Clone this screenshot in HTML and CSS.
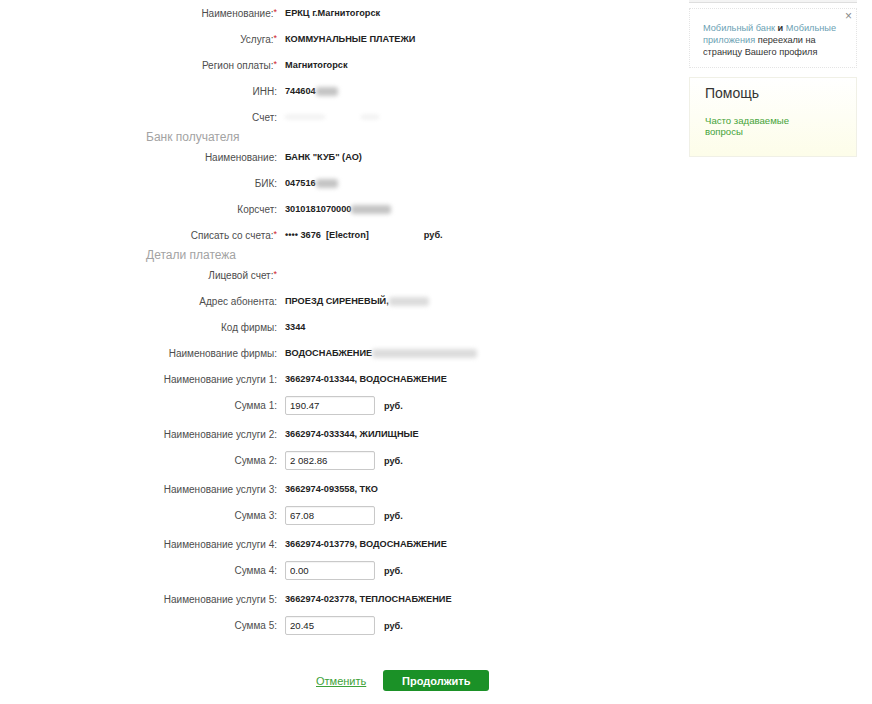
FILE: index.html
```html
<!DOCTYPE html>
<html lang="ru">
<head>
    <meta charset="utf-8" />
    <title>Оплата услуг</title>
    <link rel="stylesheet" href="styles.css">
</head>
<body>
    <div class="page">
        <div class="main">
            <div class="form">
                <div class="row"><span class="label">Наименование:<i>*</i></span><span class="value">ЕРКЦ г.Магнитогорск</span></div>
                <div class="row"><span class="label">Услуга:<i>*</i></span><span class="value">КОММУНАЛЬНЫЕ ПЛАТЕЖИ</span></div>
                <div class="row"><span class="label">Регион оплаты:<i>*</i></span><span class="value">Магнитогорск</span></div>
                <div class="row"><span class="label">ИНН:</span><span class="value">744604<span class="mask mask-s"></span></span></div>
                <div class="row"><span class="label">Счет:</span><span class="value"><span class="mask mask-faint mask-m"></span><span class="mask mask-faint mask-xs"></span></span></div>

                <h3 class="section">Банк получателя</h3>
                <div class="row"><span class="label">Наименование:</span><span class="value">БАНК "КУБ" (АО)</span></div>
                <div class="row"><span class="label">БИК:</span><span class="value">047516<span class="mask mask-s"></span></span></div>
                <div class="row"><span class="label">Корсчет:</span><span class="value">3010181070000<span class="mask mask-m"></span></span></div>
                <div class="row"><span class="label">Списать со счета:<i>*</i></span><span class="value">•••• 3676 &nbsp;[Electron]<span class="amount">руб.</span></span></div>

                <h3 class="section">Детали платежа</h3>
                <div class="row"><span class="label">Лицевой счет:<i>*</i></span><span class="value"></span></div>
                <div class="row"><span class="label">Адрес абонента:</span><span class="value">ПРОЕЗД СИРЕНЕВЫЙ,<span class="mask mask-light mask-m"></span></span></div>
                <div class="row"><span class="label">Код фирмы:</span><span class="value">3344</span></div>
                <div class="row"><span class="label">Наименование фирмы:</span><span class="value">ВОДОСНАБЖЕНИЕ<span class="mask mask-light mask-l"></span></span></div>

                <div class="row"><span class="label">Наименование услуги 1:</span><span class="value">3662974-013344, ВОДОСНАБЖЕНИЕ</span></div>
                <div class="row row-sum"><span class="label">Сумма 1:</span><span class="value"><input class="sum" type="text" value="190.47"><span class="cur">руб.</span></span></div>
                <div class="row"><span class="label">Наименование услуги 2:</span><span class="value">3662974-033344, ЖИЛИЩНЫЕ</span></div>
                <div class="row row-sum"><span class="label">Сумма 2:</span><span class="value"><input class="sum" type="text" value="2 082.86"><span class="cur">руб.</span></span></div>
                <div class="row"><span class="label">Наименование услуги 3:</span><span class="value">3662974-093558, ТКО</span></div>
                <div class="row row-sum"><span class="label">Сумма 3:</span><span class="value"><input class="sum" type="text" value="67.08"><span class="cur">руб.</span></span></div>
                <div class="row"><span class="label">Наименование услуги 4:</span><span class="value">3662974-013779, ВОДОСНАБЖЕНИЕ</span></div>
                <div class="row row-sum"><span class="label">Сумма 4:</span><span class="value"><input class="sum" type="text" value="0.00"><span class="cur">руб.</span></span></div>
                <div class="row"><span class="label">Наименование услуги 5:</span><span class="value">3662974-023778, ТЕПЛОСНАБЖЕНИЕ</span></div>
                <div class="row row-sum"><span class="label">Сумма 5:</span><span class="value"><input class="sum" type="text" value="20.45"><span class="cur">руб.</span></span></div>

                <div class="actions">
                    <a href="#" class="cancel">Отменить</a>
                    <button class="submit">Продолжить</button>
                </div>
            </div>
        </div>

        <div class="sidebar">
            <div class="top-box"></div>
            <div class="notice">
                <span class="close">×</span>
                <p class="notice-line"><a href="#" class="blue">Мобильный банк</a> <b>и</b> <a href="#apps" class="blue">Мобильные</a></p>
                <p class="notice-line"><a href="#apps" class="blue">приложения</a> переехали на</p>
                <p class="notice-line">страницу Вашего профиля</p>
            </div>
            <div class="help">
                <h4>Помощь</h4>
                <a href="#" class="green">Часто задаваемые вопросы</a>
            </div>
        </div>
    </div>
</body>
</html>
```

FILE: styles.css
```css
* {
    margin: 0;
    padding: 0;
    box-sizing: border-box;
}

body {
    font-family: "Liberation Sans", Arial, sans-serif;
    background: #fff;
    color: #333;
}

.page {
    display: flex;
    padding: 0 15px 0 146px;
}

.main {
    flex: 1;
}

.row {
    display: flex;
    align-items: center;
    height: 26px;
}

.row-sum {
    height: 29px;
    padding-bottom: 2px;
}

.label {
    width: 132px;
    flex-shrink: 0;
    text-align: right;
    font-size: 10px;
    color: #4d4d4d;
    padding-right: 1px;
    white-space: nowrap;
}

.label i {
    font-style: normal;
    color: #d0202a;
    font-size: 9px;
    vertical-align: 2px;
}

.value {
    padding-left: 7px;
    font-size: 9.2px;
    font-weight: bold;
    color: #222;
    display: flex;
    align-items: center;
    white-space: nowrap;
}

.section {
    font-size: 12px;
    font-weight: normal;
    color: #a3a3a3;
    height: 17px;
    line-height: 14px;
    margin-bottom: -3px;
}

.amount {
    margin-left: 55px;
}

.mask {
    display: inline-block;
    height: 9px;
    background: #c4c4c4;
    filter: blur(2px);
    border-radius: 3px;
}

.mask-light {
    background: #dcdcdc;
}

.mask-faint {
    background: #eeeeee;
    height: 4px;
}

.mask-xs {
    width: 18px;
    margin-left: 36px;
}

.mask-s {
    width: 22px;
}

.mask-m {
    width: 40px;
}

.mask-l {
    width: 105px;
}

.sum {
    width: 90px;
    height: 19px;
    border: 1px solid #c9c9c9;
    border-radius: 2px;
    padding: 0 4px;
    font-family: "Liberation Sans", Arial, sans-serif;
    font-size: 9.6px;
    color: #222;
    box-shadow: inset 0 1px 1px rgba(0, 0, 0, 0.05);
}

.cur {
    margin-left: 9px;
}

.actions {
    display: flex;
    align-items: center;
    gap: 17px;
    margin-top: 29px;
    padding-left: 170px;
}

.cancel {
    color: #3ea23a;
    font-size: 11px;
    text-decoration: underline;
}

.submit {
    width: 106px;
    height: 21px;
    border: none;
    border-radius: 3px;
    background: #1b9127;
    color: #fff;
    font-family: "Liberation Sans", Arial, sans-serif;
    font-size: 11px;
    font-weight: bold;
    cursor: pointer;
}

.sidebar {
    width: 168px;
    flex-shrink: 0;
}

.top-box {
    height: 3px;
    border-bottom: 1px solid #dedede;
    background: #f4f4f4;
}

.notice {
    position: relative;
    margin-top: 5px;
    border: 1px dotted #e4e4e4;
    padding: 13px 12px 10px 13px;
    height: 60px;
}

.notice-line {
    font-size: 9.2px;
    line-height: 12px;
    color: #333;
    white-space: nowrap;
}

.notice b {
    font-weight: bold;
}

.blue {
    color: #6b9fb3;
    text-decoration: none;
}

.close {
    position: absolute;
    top: 0;
    right: 4px;
    font-size: 12px;
    line-height: 14px;
    color: #8a8a8a;
}

.help {
    margin-top: 9px;
    height: 80px;
    border: 1px solid #f0f0e6;
    background: linear-gradient(to bottom, #ffffff 0%, #fdfde9 100%);
    padding: 7px 15px;
}

.help h4 {
    font-size: 14px;
    font-weight: normal;
    color: #333;
    margin-bottom: 14px;
}

.green {
    display: block;
    width: 95px;
    font-size: 9.6px;
    line-height: 11px;
    color: #45a33a;
    text-decoration: none;
}
```
